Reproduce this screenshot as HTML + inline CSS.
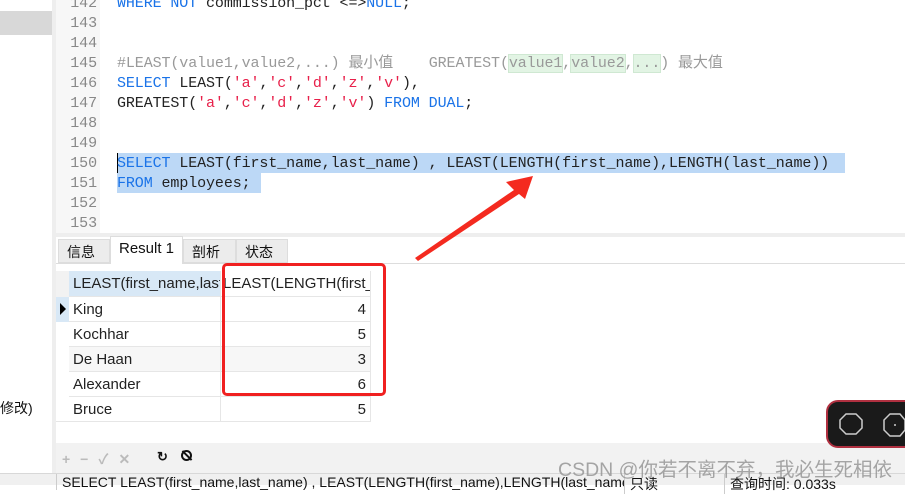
<!DOCTYPE html>
<html><head><meta charset="utf-8">
<style>
*{margin:0;padding:0;box-sizing:border-box}
body{width:905px;height:485px;overflow:hidden;background:#fff;position:relative;font-family:"Liberation Sans","Noto Sans CJK SC",sans-serif}
.abs{position:absolute}
.code{font-family:"Liberation Mono","Noto Sans CJK SC",monospace;font-size:15px;letter-spacing:-0.1px;white-space:pre;line-height:20px}
.ln{left:56px;width:44px;color:#888;text-align:right;padding-right:3px}
.kw{color:#1a73e8}.st{color:#e8204a}.cm{color:#999}.gr{background:#e2f4e4;outline:1px solid #cfe8d2}
.tab{top:239px;height:24px;font-size:14px;line-height:24px;padding-left:8px;border:1px solid #ddd;background:#ececec;color:#111}
.cell{height:25px;font-size:15px;line-height:25px;border-bottom:1px solid #e6e6e6;border-right:1px solid #e6e6e6;color:#222;padding-left:4px}
</style></head><body>
<div class="abs" style="left:0;top:11px;width:52px;height:24px;background:#d8d8d8"></div>
<div class="abs" style="left:52px;top:0;width:4px;height:475px;background:#eee"></div>
<div class="abs" style="left:0;top:398px;font-size:14px;color:#111">修改)</div>
<div class="abs" style="left:56px;top:0;width:44px;height:233px;background:#f7f7f7"></div>
<div class="abs" style="left:117px;top:153px;width:728px;height:20px;background:#bcd8f6"></div>
<div class="abs" style="left:117px;top:173px;width:144px;height:20px;background:#bcd8f6"></div>
<div class="abs" style="left:117px;top:153px;width:1px;height:20px;background:#000"></div>
<div class="abs code ln" style="top:-6px">142
143
144
145
146
147
148
149
150
151
152
153</div>
<div class="abs code" style="left:117px;top:-6px;color:#222"><span class="kw">WHERE NOT</span> commission_pct &lt;=&gt;<span class="kw">NULL</span>;


<span class="cm">#LEAST(value1,value2,...) 最小值    GREATEST(<span class="gr">value1</span>,<span class="gr">value2</span>,<span class="gr">...</span>) 最大值</span>
<span class="kw">SELECT</span> LEAST(<span class="st">'a'</span>,<span class="st">'c'</span>,<span class="st">'d'</span>,<span class="st">'z'</span>,<span class="st">'v'</span>),
GREATEST(<span class="st">'a'</span>,<span class="st">'c'</span>,<span class="st">'d'</span>,<span class="st">'z'</span>,<span class="st">'v'</span>) <span class="kw">FROM DUAL</span>;


<span class="kw">SELECT</span> LEAST(first_name,last_name) , LEAST(LENGTH(first_name),LENGTH(last_name))
<span class="kw">FROM</span> employees;

</div>
<div class="abs" style="left:56px;top:233px;width:849px;height:4px;background:#eee"></div>
<div class="abs" style="left:56px;top:263px;width:849px;height:1px;background:#ddd"></div>
<div class="abs tab" style="left:58px;width:52px">信息</div>
<div class="abs tab" style="left:110px;width:73px;background:#fff;top:236px;height:28px;border-bottom:none;font-size:15px">Result 1</div>
<div class="abs tab" style="left:183px;width:53px">剖析</div>
<div class="abs tab" style="left:236px;width:52px">状态</div>
<div class="abs" style="left:56px;top:271px;width:13px;height:26px;background:#f2f2f2"></div>
<div class="abs cell" style="left:69px;top:271px;width:152px;height:26px;background:#d8e8f6;white-space:nowrap;overflow:hidden">LEAST(first_name,last_name)</div>
<div class="abs cell" style="left:221px;top:271px;width:150px;height:26px;background:#fff;white-space:nowrap;overflow:hidden;padding-left:2px">LEAST(LENGTH(first_name)</div>
<div class="abs" style="left:56px;top:297px;width:13px;height:25px;background:#d8e8f6"></div>
<div class="abs" style="left:60px;top:303px;width:0;height:0;border-left:6px solid #000;border-top:6px solid transparent;border-bottom:6px solid transparent"></div>
<div class="abs cell" style="left:69px;top:297px;width:152px">King</div><div class="abs cell" style="left:221px;top:297px;width:150px;text-align:right;padding-right:4px">4</div>
<div class="abs cell" style="left:69px;top:322px;width:152px">Kochhar</div><div class="abs cell" style="left:221px;top:322px;width:150px;text-align:right;padding-right:4px">5</div>
<div class="abs cell" style="left:69px;top:347px;width:152px;background:#f7f7f7">De Haan</div><div class="abs cell" style="left:221px;top:347px;width:150px;text-align:right;padding-right:4px;background:#f7f7f7">3</div>
<div class="abs cell" style="left:69px;top:372px;width:152px">Alexander</div><div class="abs cell" style="left:221px;top:372px;width:150px;text-align:right;padding-right:4px">6</div>
<div class="abs cell" style="left:69px;top:397px;width:152px">Bruce</div><div class="abs cell" style="left:221px;top:397px;width:150px;text-align:right;padding-right:4px">5</div>
<div class="abs" style="left:56px;top:322px;width:13px;height:100px;border-bottom:1px solid #e6e6e6"></div>
<div class="abs" style="left:222px;top:263px;width:164px;height:133px;border:3px solid #f02020;border-radius:5px"></div>
<svg class="abs" style="left:0;top:0" width="905" height="485"><path d="M415 258 L514 190 L506 182 L533 176 L525 199 L519 194 L418 261Z" fill="#f42a1f"/></svg>
<div class="abs" style="left:56px;top:443px;width:849px;height:30px;background:#f2f2f2"></div>
<div class="abs" style="left:62px;top:449px;font-size:14px;color:#bbb;letter-spacing:10px;font-weight:bold">+−✓✕</div>
<div class="abs" style="left:157px;top:449px;font-size:13px;font-weight:bold;color:#111">↻</div>
<div class="abs" style="left:181px;top:450px;width:11px;height:11px;border:2px solid #111;border-radius:50%"></div>
<div class="abs" style="left:186px;top:449px;width:2px;height:13px;background:#111;transform:rotate(-45deg)"></div>
<div class="abs" style="left:0;top:473px;width:905px;height:12px;background:#f0f0f0;border-top:1px solid #d8d8d8"></div>
<div class="abs" style="left:56px;top:474px;font-size:14px;color:#111;white-space:nowrap;width:568px;overflow:hidden;border-left:1px solid #ccc;padding-left:5px">SELECT LEAST(first_name,last_name) , LEAST(LENGTH(first_name),LENGTH(last_name))</div>
<div class="abs" style="left:624px;top:474px;font-size:14px;color:#111;border-left:1px solid #ccc;padding-left:5px;width:100px">只读</div>
<div class="abs" style="left:724px;top:474px;font-size:14px;color:#111;border-left:1px solid #ccc;padding-left:5px">查询时间: 0.033s</div>
<div class="abs" style="left:558px;top:453px;font-size:19.5px;color:rgba(150,150,150,.85);white-space:nowrap">CSDN @你若不离不弃，我必生死相依</div>
<div class="abs" style="left:826px;top:400px;width:90px;height:48px;background:#1a1a1a;border:2px solid #b03040;border-radius:12px 0 0 12px"></div>
<svg class="abs" style="left:838px;top:410px" width="67" height="32"><polygon points="8,4 18,4 24,10 24,18 18,24 8,24 2,18 2,10" fill="none" stroke="#ccc" stroke-width="1.5"/><polygon points="52,4 62,4 67,10 67,20 62,26 52,26 46,20 46,10" fill="none" stroke="#ccc" stroke-width="1.5"/><circle cx="57" cy="15" r="1" fill="#ccc"/></svg>
</body></html>
